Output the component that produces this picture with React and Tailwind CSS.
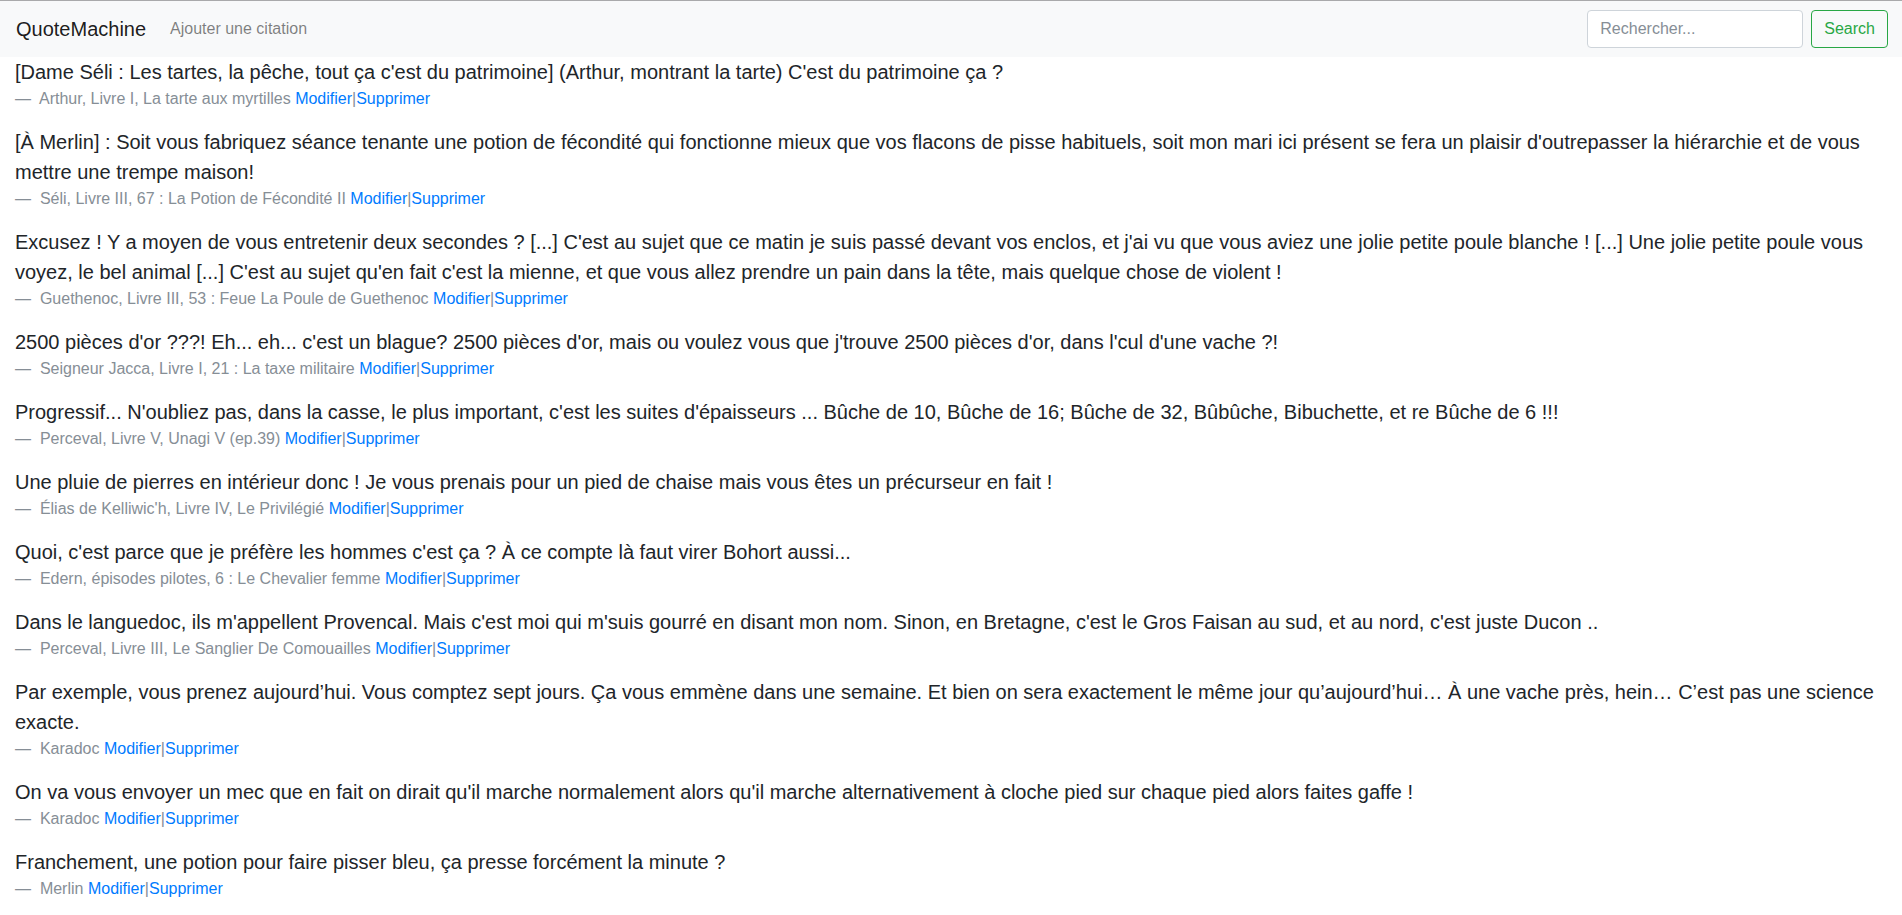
import React from "react";

const quotes = [
  ["[Dame Séli : Les tartes, la pêche, tout ça c'est du patrimoine] (Arthur, montrant la tarte) C'est du patrimoine ça ?", "Arthur, Livre I, La tarte aux myrtilles"],
  ["[À Merlin] : Soit vous fabriquez séance tenante une potion de fécondité qui fonctionne mieux que vos flacons de pisse habituels, soit mon mari ici présent se fera un plaisir d'outrepasser la hiérarchie et de vous mettre une trempe maison!", "Séli, Livre III, 67 : La Potion de Fécondité II"],
  ["Excusez ! Y a moyen de vous entretenir deux secondes ? [...] C'est au sujet que ce matin je suis passé devant vos enclos, et j'ai vu que vous aviez une jolie petite poule blanche ! [...] Une jolie petite poule vous voyez, le bel animal [...] C'est au sujet qu'en fait c'est la mienne, et que vous allez prendre un pain dans la tête, mais quelque chose de violent !", "Guethenoc, Livre III, 53 : Feue La Poule de Guethenoc"],
  ["2500 pièces d'or ???! Eh... eh... c'est un blague? 2500 pièces d'or, mais ou voulez vous que j'trouve 2500 pièces d'or, dans l'cul d'une vache ?!", "Seigneur Jacca, Livre I, 21 : La taxe militaire"],
  ["Progressif... N'oubliez pas, dans la casse, le plus important, c'est les suites d'épaisseurs ... Bûche de 10, Bûche de 16; Bûche de 32, Bûbûche, Bibuchette, et re Bûche de 6 !!!", "Perceval, Livre V, Unagi V (ep.39)"],
  ["Une pluie de pierres en intérieur donc ! Je vous prenais pour un pied de chaise mais vous êtes un précurseur en fait !", "Élias de Kelliwic'h, Livre IV, Le Privilégié"],
  ["Quoi, c'est parce que je préfère les hommes c'est ça ? À ce compte là faut virer Bohort aussi...", "Edern, épisodes pilotes, 6 : Le Chevalier femme"],
  ["Dans le languedoc, ils m'appellent Provencal. Mais c'est moi qui m'suis gourré en disant mon nom. Sinon, en Bretagne, c'est le Gros Faisan au sud, et au nord, c'est juste Ducon ..", "Perceval, Livre III, Le Sanglier De Comouailles"],
  ["Par exemple, vous prenez aujourd’hui. Vous comptez sept jours. Ça vous emmène dans une semaine. Et bien on sera exactement le même jour qu’aujourd’hui… À une vache près, hein… C’est pas une science exacte.", "Karadoc"],
  ["On va vous envoyer un mec que en fait on dirait qu'il marche normalement alors qu'il marche alternativement à cloche pied sur chaque pied alors faites gaffe !", "Karadoc"],
  ["Franchement, une potion pour faire pisser bleu, ça presse forcément la minute ?", "Merlin"],
];

export default function App() {
  return (
    <div
      className="min-h-screen bg-white text-[#212529]"
      style={{ fontFamily: '"Liberation Sans", Arial, sans-serif' }}
    >
      <nav className="flex items-center justify-between border-t border-[#a9a9ab] bg-[#f8f9fa] pl-4 pr-[14px] py-2">
        <div className="flex items-center">
          <span className="mr-4 py-[5px] text-[20px] leading-[30px] text-[rgba(0,0,0,0.9)]">QuoteMachine</span>
          <span className="px-2 py-2 text-[16px] leading-[24px] text-[rgba(0,0,0,0.5)]">Ajouter une citation</span>
        </div>
        <div className="flex items-center">
          <input
            type="search"
            placeholder="Rechercher..."
            className="mr-2 h-[38px] w-[216px] rounded-[4px] border border-[#ced4da] bg-white px-3 py-[6px] text-[16px] leading-[24px] text-[#495057] placeholder:text-[#868e96] outline-none"
          />
          <button className="h-[38px] rounded-[4px] border border-[#28a745] bg-transparent px-3 py-[6px] text-[16px] leading-[24px] text-[#28a745]">
            Search
          </button>
        </div>
      </nav>
      <div className="px-[15px]">
        {quotes.map(([q, a], i) => (
          <div key={i} className="mb-4">
            <p className="text-[20px] leading-[30px]">{q}</p>
            <div className="text-[16px] leading-[24px] text-[#868e96]">
              {"\u2014\u00a0 "}
              {a}{" "}
              <span className="text-[#007bff]">Modifier</span>|<span className="text-[#007bff]">Supprimer</span>
            </div>
          </div>
        ))}
      </div>
    </div>
  );
}
